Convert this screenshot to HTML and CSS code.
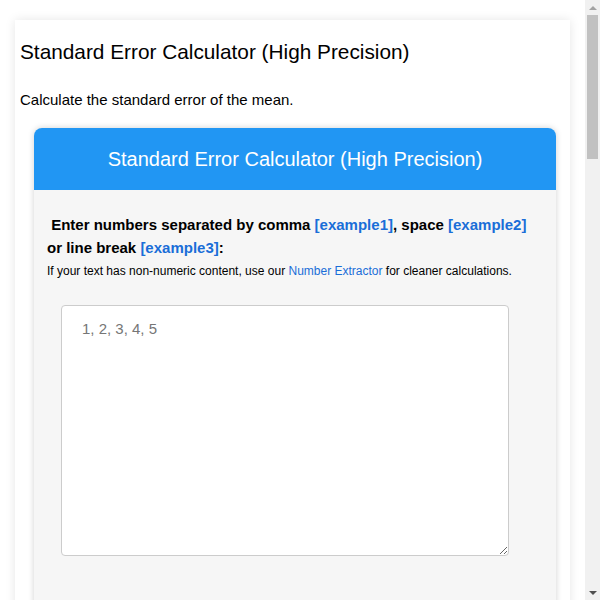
FILE: index.html
```html
<!DOCTYPE html>
<html lang="en">
<head>
<meta charset="utf-8">
<title>Standard Error Calculator (High Precision)</title>
<link rel="stylesheet" href="styles.css">
</head>
<body>
<div class="container">
  <h1 class="page-title">Standard Error Calculator (High Precision)</h1>
  <p class="intro">Calculate the standard error of the mean.</p>
  <div class="card">
    <div class="card-header">Standard Error Calculator (High Precision)</div>
    <div class="card-body">
      <p class="instructions">&nbsp;Enter numbers separated by comma <a href="#">[example1]</a>, space <a href="#">[example2]</a> or line break <a href="#">[example3]</a>:</p>
      <p class="note">If your text has non-numeric content, use our <a href="#">Number Extractor</a> for cleaner calculations.</p>
      <textarea class="data-input" placeholder="1, 2, 3, 4, 5"></textarea>
      <div class="spacer"></div>
    </div>
  </div>
</div>
<div class="scrollbar" aria-hidden="true">
  <div class="sb-arrow sb-up"></div>
  <div class="sb-track"><div class="sb-thumb"></div></div>
  <div class="sb-arrow sb-down"></div>
</div>
</body>
</html>
```
FILE: styles.css
```css
html, body {
  margin: 0;
  padding: 0;
  background: #ffffff;
}
body {
  font-family: "Liberation Sans", Arial, sans-serif;
  color: #000;
  padding: 20px 30px 40px 15px;
}
.container {
  background: #fff;
  padding: 5px 5px 40px;
  box-shadow: 0 0 10px rgba(0, 0, 0, 0.1);
}
.page-title {
  font-size: 20.8px;
  font-weight: normal;
  margin: 14px 0 0;
  line-height: 25px;
}
.intro {
  font-size: 15px;
  margin: 27px 0 0;
  line-height: 18px;
}
.card {
  margin: 19px 9px 0 14px;
  border-radius: 8px;
  background: #f6f6f6;
  box-shadow: 0 0 6px rgba(0, 0, 0, 0.18);
  overflow: hidden;
}
.card-header {
  background: #2196f3;
  color: #fff;
  text-align: center;
  font-size: 20px;
  height: 62px;
  line-height: 62px;
}
.card-body {
  padding: 23px 13px 0;
}
a {
  color: #1a6ed8;
  text-decoration: none;
}
.instructions {
  font-size: 15px;
  font-weight: bold;
  line-height: 23px;
  margin: 0;
}
.note {
  font-size: 12px;
  margin: 4px 0 0;
  line-height: 16px;
}
.data-input {
  display: block;
  box-sizing: border-box;
  width: 448px;
  height: 251px;
  margin: 26px 0 0 14px;
  padding: 14px 20px;
  border: 1px solid #cccccc;
  border-radius: 4px;
  font-family: "Liberation Sans", Arial, sans-serif;
  font-size: 15px;
  background: #fff;
}
.data-input::placeholder {
  color: #767676;
}
.spacer {
  height: 1700px;
}
.scrollbar {
  position: fixed;
  top: 0;
  right: 0;
  width: 15px;
  height: 100vh;
  background: #f1f1f1;
  display: flex;
  flex-direction: column;
}
.sb-arrow {
  height: 15px;
  flex: none;
  display: flex;
  align-items: center;
  justify-content: center;
}
.sb-up::before {
  content: "";
  border-left: 4px solid transparent;
  border-right: 4px solid transparent;
  border-bottom: 4px solid #a3a3a3;
}
.sb-down::before {
  content: "";
  border-left: 4px solid transparent;
  border-right: 4px solid transparent;
  border-top: 4px solid #505050;
}
.sb-track {
  flex: 1;
  padding: 0 2px;
}
.sb-thumb {
  height: 144px;
  background: #c1c1c1;
}
```
